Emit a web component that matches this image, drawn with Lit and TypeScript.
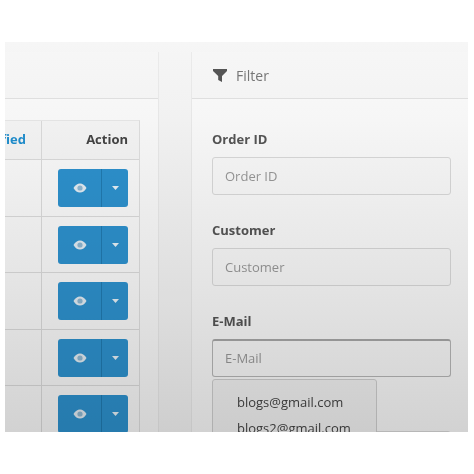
import { LitElement, html, css } from 'lit';
import { customElement } from 'lit/decorators.js';

const ROWS = [0, 1, 2, 3, 4];

@customElement('app-root')
export class AppRoot extends LitElement {
  static styles = css`
    :host {
      display: block;
      width: 474px;
      height: 474px;
      background: #fff;
      overflow: hidden;
      font-family: 'Open Sans', 'Noto Sans', sans-serif;
    }
    .page {
      padding: 42px 6px 0 5px;
    }
    .shot {
      position: relative;
      height: 390px;
      overflow: hidden;
      background: #f6f6f6;
      filter: blur(0.7px);
    }
    /* the fade to grey lies over everything in the shot */
    .shot::after {
      content: '';
      position: absolute;
      inset: 0;
      pointer-events: none;
      mix-blend-mode: multiply;
      background: linear-gradient(180deg, #fff 0%, #fafafa 20%, #e9e9e9 60%, #d6d6d6 100%);
    }
    .columns {
      display: grid;
      grid-template-columns: 154px 277px;
      gap: 32px;
      padding-top: 10px;
    }
    .panel {
      background: #fbfbfb;
      border: 1px solid #ebebeb;
      height: 420px;
    }
    .panel.left {
      border-left: none;
    }
    .panel.right {
      width: 290px;
    }
    .heading {
      box-sizing: border-box;
      height: 47px;
      background: #f7f7f7;
      border-bottom: 1px solid #e2e2e2;
      display: flex;
      align-items: center;
      gap: 9px;
      padding-left: 21px;
      margin-top: -1px;
      color: #777;
      font-size: 14px;
    }
    .table {
      width: 134px;
      margin-top: 21px;
      border-top: 1px solid #e8e8e8;
      border-right: 1px solid #e0e0e0;
    }
    .row {
      display: grid;
      grid-template-columns: 37px 97px;
      box-sizing: border-box;
      height: 56.5px;
      border-bottom: 1px solid #dcdcdc;
    }
    .row.head {
      height: 39px;
      background: #f6f6f6;
      font-size: 13px;
      font-weight: 700;
      line-height: 37px;
    }
    .first {
      border-right: 1px solid #dcdcdc;
      display: flex;
      justify-content: flex-end;
      overflow: hidden;
      white-space: nowrap;
      padding-right: 15px;
      color: #1f8fcf;
    }
    .action {
      text-align: right;
      padding-right: 11px;
      color: #444;
    }
    .cell {
      display: flex;
      justify-content: flex-end;
      padding: 9px 11px 0 0;
    }
    .btn {
      display: flex;
      height: 38px;
      width: 70px;
      border-radius: 3px;
      overflow: hidden;
      background: #2d92cf;
    }
    .btn .eye {
      width: 43px;
      display: flex;
      align-items: center;
      justify-content: center;
      border-right: 1px solid #207bb2;
    }
    .btn .caret {
      flex: 1;
      display: flex;
      align-items: center;
      justify-content: center;
    }
    .body {
      padding: 32px 0 0 20px;
      width: 239px;
    }
    label {
      display: block;
      font-size: 13px;
      font-weight: 700;
      line-height: 16px;
      color: #555;
      margin-bottom: 10px;
    }
    .input {
      box-sizing: border-box;
      height: 38px;
      padding-left: 12px;
      line-height: 36px;
      font-size: 13px;
      color: #999;
      background: #fafafa;
      border: 1px solid #dadada;
      border-radius: 3px;
      margin-bottom: 27px;
    }
    .field {
      position: relative;
      margin-bottom: 54px;
    }
    .input.focus {
      border: 1px solid #b8b8b8;
      border-top: 2px solid #a8a8a8;
      margin-bottom: 0;
      line-height: 34px;
    }
    /* suggestions hang over the next field */
    .menu {
      position: absolute;
      top: 40px;
      left: 0;
      box-sizing: border-box;
      width: 165px;
      height: 80px;
      padding: 9px 0 0 24px;
      font-size: 13px;
      line-height: 26px;
      color: #444;
      background: #f4f4f4;
      border: 1px solid #d0d0d0;
      border-radius: 3px;
    }
  `;

  private renderRow() {
    return html`
      <div class="row">
        <div class="first"></div>
        <div class="cell">
          <div class="btn">
            <div class="eye">
              <svg width="14" height="10" viewBox="0 0 14 10">
                <path d="M0.5 5C2.2 2 4.4 0.5 7 0.5S11.8 2 13.5 5C11.8 8 9.6 9.5 7 9.5S2.2 8 0.5 5Z" fill="#e4eef5" />
                <circle cx="7" cy="5" r="2.6" fill="#8fb9d4" />
              </svg>
            </div>
            <div class="caret">
              <svg width="7" height="4" viewBox="0 0 7 4"><path d="M0 0H7L3.5 4Z" fill="#e8f2f8" /></svg>
            </div>
          </div>
        </div>
      </div>
    `;
  }

  render() {
    return html`
      <div class="page">
        <div class="shot">
          <div class="columns">
            <div class="panel left">
              <div class="heading"></div>
              <div class="table">
                <div class="row head">
                  <div class="first"><span>Verified</span></div>
                  <div class="action">Action</div>
                </div>
                ${ROWS.map(() => this.renderRow())}
              </div>
            </div>
            <div class="panel right">
              <div class="heading">
                <svg width="14" height="13" viewBox="0 0 14 13">
                  <path d="M0 0H14V2L9 7V13L5.2 11V7L0 2Z" fill="#555" />
                </svg>
                <span>Filter</span>
              </div>
              <div class="body">
                <label>Order ID</label>
                <div class="input">Order ID</div>
                <label>Customer</label>
                <div class="input">Customer</div>
                <label>E-Mail</label>
                <div class="field">
                  <div class="input focus">E-Mail</div>
                  <div class="menu">
                    <div>blogs@gmail.com</div>
                    <div>blogs2@gmail.com</div>
                  </div>
                </div>
                <div class="input"></div>
              </div>
            </div>
          </div>
        </div>
      </div>
    `;
  }
}
